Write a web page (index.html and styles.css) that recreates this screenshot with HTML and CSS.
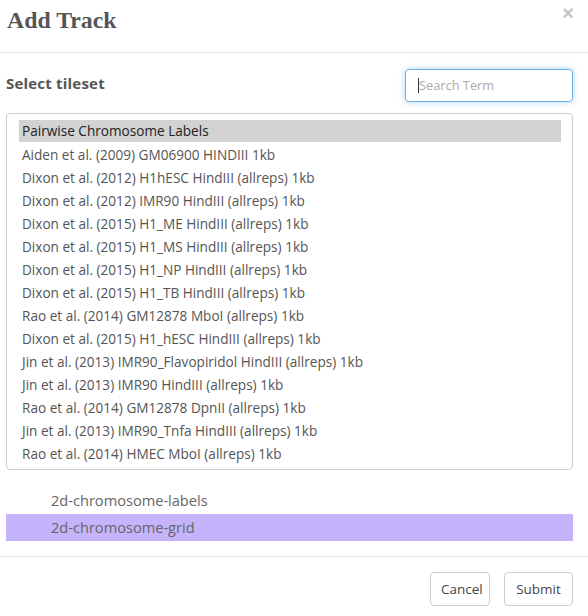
FILE: index.html
```html
<!DOCTYPE html>
<html>
<head>
<meta charset="utf-8">
<link rel="stylesheet" href="styles.css">
</head>
<body>
<div class="modal">
  <div class="header">
    <h4 class="title">Add Track</h4>
    <span class="close">×</span>
  </div>
  <div class="body">
    <div class="toolbar">
      <span class="label">Select tileset</span>
      <div class="search"><span class="caret"></span><span class="placeholder">Search Term</span></div>
    </div>
    <div class="list">
      <div class="opt selected">Pairwise Chromosome Labels</div>
      <div class="opt">Aiden et al. (2009) GM06900 HINDIII 1kb</div>
      <div class="opt">Dixon et al. (2012) H1hESC HindIII (allreps) 1kb</div>
      <div class="opt">Dixon et al. (2012) IMR90 HindIII (allreps) 1kb</div>
      <div class="opt">Dixon et al. (2015) H1_ME HindIII (allreps) 1kb</div>
      <div class="opt">Dixon et al. (2015) H1_MS HindIII (allreps) 1kb</div>
      <div class="opt">Dixon et al. (2015) H1_NP HindIII (allreps) 1kb</div>
      <div class="opt">Dixon et al. (2015) H1_TB HindIII (allreps) 1kb</div>
      <div class="opt">Rao et al. (2014) GM12878 MboI (allreps) 1kb</div>
      <div class="opt">Dixon et al. (2015) H1_hESC HindIII (allreps) 1kb</div>
      <div class="opt">Jin et al. (2013) IMR90_Flavopiridol HindIII (allreps) 1kb</div>
      <div class="opt">Jin et al. (2013) IMR90 HindIII (allreps) 1kb</div>
      <div class="opt">Rao et al. (2014) GM12878 DpnII (allreps) 1kb</div>
      <div class="opt">Jin et al. (2013) IMR90_Tnfa HindIII (allreps) 1kb</div>
      <div class="opt">Rao et al. (2014) HMEC MboI (allreps) 1kb</div>
    </div>
    <div class="types">
      <div class="type">2d-chromosome-labels</div>
      <div class="type active">2d-chromosome-grid</div>
    </div>
  </div>
  <div class="footer">
    <button class="btn">Cancel</button>
    <button class="btn">Submit</button>
  </div>
</div>
</body>
</html>
```
FILE: styles.css
```css
html, body { margin: 0; padding: 0; background: #fff; }
body { font-family: "Open Sans", "Liberation Sans", sans-serif; color: #555; }
.modal { width: 588px; }
.header {
  height: 53px;
  border-bottom: 1px solid #e5e5e5;
  display: flex;
  justify-content: space-between;
  align-items: flex-start;
  box-sizing: border-box;
  padding: 0 14px 0 7px;
}
.title {
  margin: 0;
  padding-top: 5px;
  font-family: "Liberation Serif", serif;
  font-weight: bold;
  font-size: 23.8px;
  line-height: 30px;
  color: #555;
}
.close {
  font-size: 20px;
  font-weight: bold;
  color: #c4c4c4;
  line-height: 20px;
  padding-top: 3px;
  font-family: "Liberation Sans", sans-serif;
}
.body { padding: 15px 15px 0 6px; }
.toolbar {
  display: flex;
  justify-content: space-between;
  align-items: center;
  height: 34px;
}
.label { font-weight: bold; font-size: 15px; letter-spacing: 0.2px; color: #555; margin-top: -4px; }
.search {
  width: 168px;
  height: 33px;
  box-sizing: border-box;
  border: 1px solid #66afe9;
  border-radius: 4px;
  box-shadow: 0 0 6px rgba(102,175,233,0.5);
  display: flex;
  align-items: center;
  padding-left: 12px;
}
.caret { width: 1px; height: 15px; background: #333; }
.placeholder { font-size: 12.8px; color: #aaa; }
.list {
  margin-top: 11px;
  height: 357px;
  box-sizing: border-box;
  border: 1px solid #ccc;
  border-radius: 4px;
  padding: 6px 11px 0 12px;
  overflow: hidden;
}
.opt {
  height: 23px;
  line-height: 23px;
  font-size: 13.6px;
  padding-left: 3px;
  color: #555;
  white-space: nowrap;
}
.opt.selected { background: #d3d3d3; color: #222; height: 22px; line-height: 22px; margin-bottom: 1px; }
.types { padding-top: 17px; }
.type {
  height: 27px;
  line-height: 27px;
  font-size: 14.6px;
  padding-left: 45px;
  color: #666;
}
.type.active { background: #c5b3fc; }
.footer {
  margin-top: 15px;
  border-top: 1px solid #e5e5e5;
  display: flex;
  justify-content: flex-end;
  gap: 14px;
  padding: 15px 15px 0 0;
}
.btn {
  font-family: "Open Sans", "Liberation Sans", sans-serif;
  font-size: 13.5px;
  color: #444;
  background: #fff;
  border: 1px solid #ccc;
  border-radius: 4px;
  height: 34px;
  padding: 0 10px;
}
.btn:first-child { width: 60px; }
.btn:last-child { width: 69px; }
```
